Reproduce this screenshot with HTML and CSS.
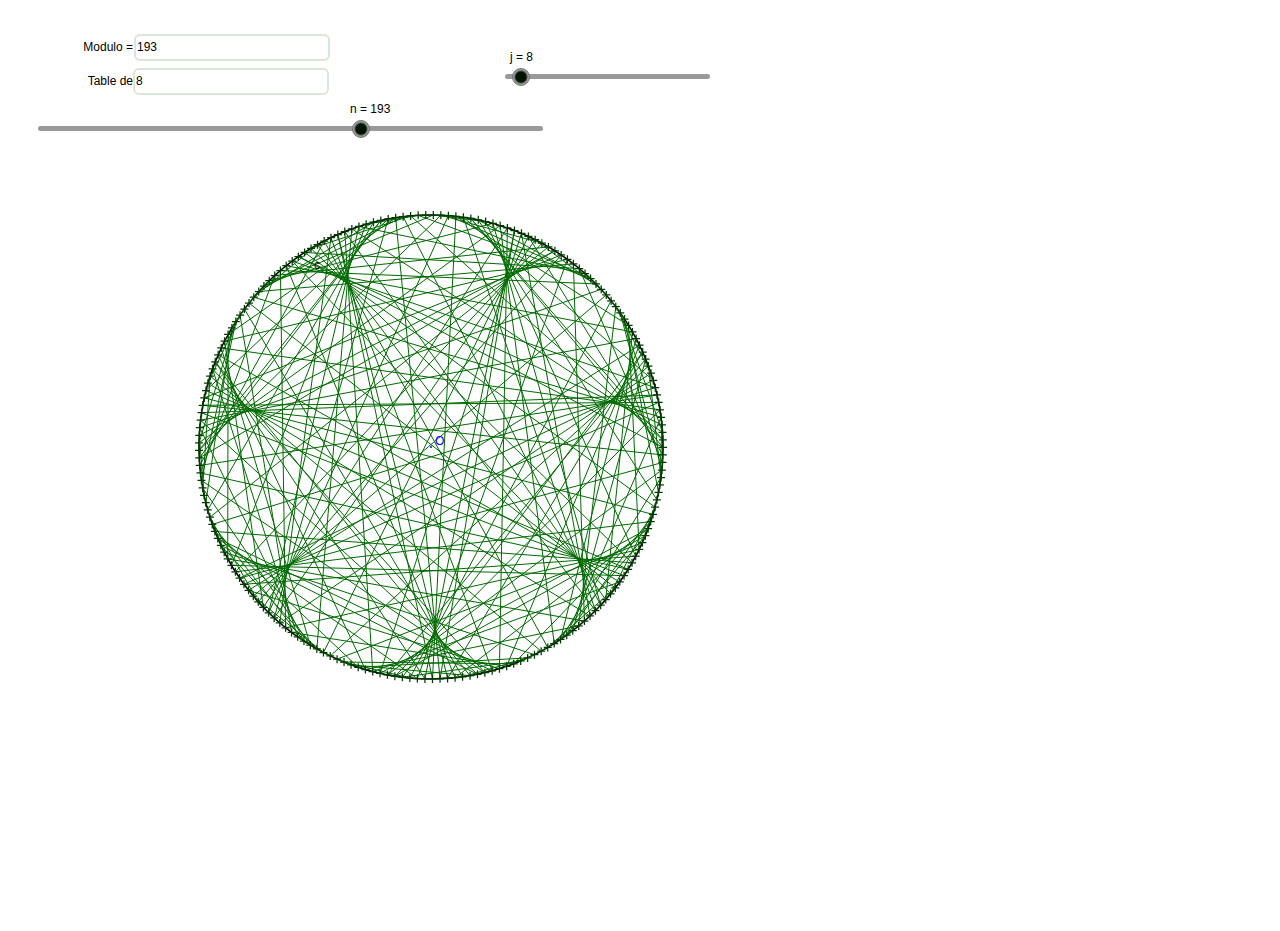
FILE: index.html
```
<!DOCTYPE html>
<html lang="fr">
<head>
    <meta charset="UTF-8">
    <meta name="viewport" content="width=device-width, initial-scale=1.0">
    <title>Tables de multiplication modulo n</title>
    <link rel="stylesheet" href="styles.css">
</head>
<body>
    <div class="controls">
        <div class="left">
            <form class="fields" id="fields">
                <div class="field">
                    <label for="modulo">Modulo =</label>
                    <input type="text" id="modulo" value="193">
                </div>
                <div class="field table-field">
                    <label for="table">Table de</label>
                    <input type="text" id="table" value="8">
                </div>
                <input type="submit" hidden>
            </form>
            <div class="slider slider-n">
                <label for="n" id="nLabel">n = 193</label>
                <input type="range" id="n" min="0" max="299" value="193">
            </div>
        </div>
        <div class="slider slider-j">
            <label for="j" id="jLabel">j = 8</label>
            <input type="range" id="j" min="0" max="200" value="8">
        </div>
    </div>

    <svg class="figure" viewBox="-240 -240 480 480" role="img" aria-label="Cordes du cercle">
        <circle class="circle" r="232"/>
        <path class="chords" id="chords"/>
        <path class="points" id="points"/>
        <text class="circle-label" x="-117" y="-178">c</text>
        <circle class="center" r="1"/>
        <text class="center-label" x="4" y="-2">O</text>
    </svg>

    <script src="script.js"></script>
</body>
</html>
```
FILE: styles.css
```
body {
    margin: 0;
    padding: 34px 38px;
    background-color: white;
    color: #000;
    font-family: "Liberation Sans", Arial, sans-serif;
    font-size: 12px;
    line-height: 16px;
}
.controls {
    display: flex;
    align-items: flex-start;
}
.left {
    flex: 0 1 467px;
    min-width: 0;
}
.fields {
    display: flex;
    flex-direction: column;
    gap: 7px;
    padding-left: 40px;
}
.field {
    display: flex;
    align-items: center;
    gap: 1px;
}
.field label {
    width: 55px;
    padding-bottom: 2px;
    text-align: right;
    white-space: nowrap;
}
.table-field {
    gap: 0;
}
.field input {
    box-sizing: border-box;
    width: 196px;
    height: 27px;
    padding: 0 1px 2px;
    border: 2px solid #dbe6db;
    border-radius: 6px;
    font: inherit;
    color: #000;
    outline: none;
}
.slider {
    display: flex;
    flex-direction: column;
}
.slider-n {
    width: 505px;
    margin-top: 6px;
}
.slider-n label {
    padding-left: 312px;
}
.slider-j {
    width: 205px;
    margin-top: 15px;
}
.slider-j label {
    padding-left: 5px;
}
.slider input {
    -webkit-appearance: none;
    appearance: none;
    width: 100%;
    height: 18px;
    margin: 2px 0 0;
    background: transparent;
}
.slider input::-webkit-slider-runnable-track {
    height: 5px;
    border-radius: 3px;
    background-color: #999;
}
.slider input::-webkit-slider-thumb {
    -webkit-appearance: none;
    box-sizing: border-box;
    width: 18px;
    height: 18px;
    margin-top: -6px;
    border: 1px solid #6e756e;
    border-radius: 50%;
    background: radial-gradient(circle, #001400 5px, #999 7px);
}
.figure {
    display: block;
    width: 480px;
    height: 480px;
    margin: 70px 0 0 153px;
}
.circle {
    fill: none;
    stroke: #000;
    stroke-width: 1.5;
}
.chords {
    fill: none;
    stroke: #006a00;
    stroke-width: 1;
}
.points {
    fill: none;
    stroke: #003c00;
    stroke-width: 1.25;
}
.circle-label {
    font-size: 12px;
}
.center {
    fill: #00f;
}
.center-label {
    fill: #00f;
    font-size: 12px;
}
```
FILE: script.js
```
var R = 232;
var START = 91.3; // angle of the first point, in degrees

var nInput = document.getElementById('n');
var jInput = document.getElementById('j');
var modulo = document.getElementById('modulo');
var table = document.getElementById('table');

function point(k, n) {
    var a = (START + k * 360 / n) * Math.PI / 180;
    return [R * Math.cos(a), -R * Math.sin(a)];
}

function draw() {
    var n = Number(nInput.value);
    var j = Number(jInput.value);
    var chords = '';
    var points = '';

    for (var k = 0; k < n; k++) {
        var p = point(k, n);
        var q = point(k * j % n, n);
        chords += 'M' + p[0] + ' ' + p[1] + 'L' + q[0] + ' ' + q[1];
        points += 'M' + (p[0] - 4) + ' ' + p[1] + 'h8M' + p[0] + ' ' + (p[1] - 4) + 'v8';
    }
    document.getElementById('chords').setAttribute('d', chords);
    document.getElementById('points').setAttribute('d', points);

    document.getElementById('nLabel').textContent = 'n = ' + n;
    document.getElementById('jLabel').textContent = 'j = ' + j;
    modulo.value = n;
    table.value = j;
}

nInput.oninput = draw;
jInput.oninput = draw;
document.getElementById('fields').onsubmit = function(e) {
    e.preventDefault();
    nInput.value = modulo.value;
    jInput.value = table.value;
    draw();
};

draw();
```
